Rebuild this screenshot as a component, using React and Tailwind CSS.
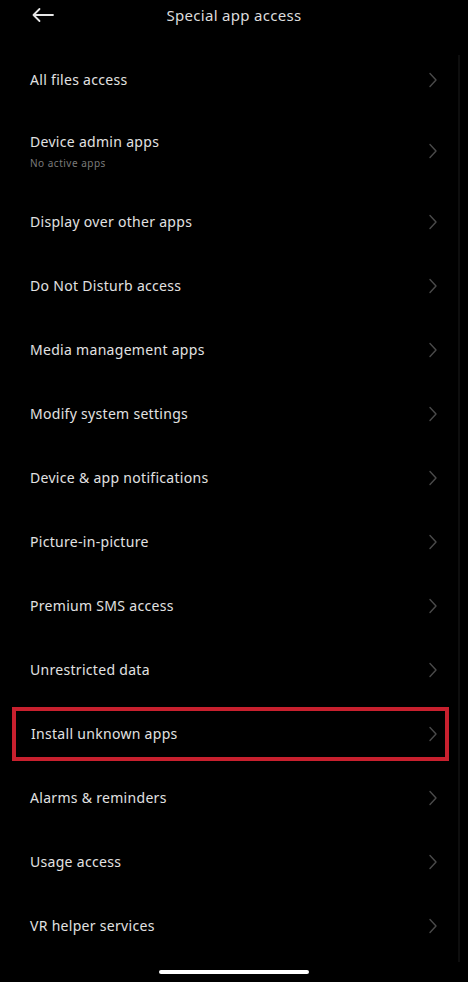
import React from "react";

const items = [
  { title: "All files access" },
  { title: "Device admin apps", sub: "No active apps" },
  { title: "Display over other apps" },
  { title: "Do Not Disturb access" },
  { title: "Media management apps" },
  { title: "Modify system settings" },
  { title: "Device & app notifications" },
  { title: "Picture-in-picture" },
  { title: "Premium SMS access" },
  { title: "Unrestricted data" },
  { title: "Install unknown apps", highlight: true },
  { title: "Alarms & reminders" },
  { title: "Usage access" },
  { title: "VR helper services" },
];

function Chevron() {
  return (
    <svg width="10" height="16" viewBox="0 0 10 16" fill="none" className="shrink-0">
      <path d="M2 1.5 L8 8 L2 14.5" stroke="#4a4a4a" strokeWidth="1.4" strokeLinecap="round" strokeLinejoin="round" />
    </svg>
  );
}

function Row({ item }) {
  if (item.highlight) {
    return (
      <div className="h-16 flex items-center pl-3 pr-[19px]">
        <div className="w-full h-[54px] border-4 border-[#c8202e] flex items-center justify-between pl-[15px] pr-[7px]">
          <span className="text-[14px] text-[#e2e2e2] tracking-[0.3px] leading-5">{item.title}</span>
          <Chevron />
        </div>
      </div>
    );
  }

  return (
    <div className={`flex items-center justify-between pl-[30px] pr-[30px] ${item.sub ? "h-[78px]" : "h-16"}`}>
      <div className="flex flex-col">
        <span className="text-[14px] text-[#e2e2e2] tracking-[0.3px] leading-5">{item.title}</span>
        {item.sub && (
          <span className="text-[10px] text-[#7a7a7a] tracking-[0.5px] leading-4 mt-[3px]">{item.sub}</span>
        )}
      </div>
      <Chevron />
    </div>
  );
}

export default function App() {
  return (
    <div
      className="w-[468px] h-[982px] bg-black overflow-hidden relative flex flex-col"
      style={{ fontFamily: "'Noto Sans', 'Open Sans', sans-serif" }}
    >
      <div className="h-[30px] flex items-center relative shrink-0">
        <svg width="24" height="16" viewBox="0 0 24 16" fill="none" className="ml-[31px]">
          <path d="M22 8 H2.5 M8.5 2 L2.5 8 L8.5 14" stroke="#e6e6e6" strokeWidth="1.8" strokeLinecap="round" strokeLinejoin="round" />
        </svg>
        <span className="absolute left-0 right-0 text-center text-[15px] text-[#dcdcdc] tracking-[0.3px]">
          Special app access
        </span>
      </div>
      <div className="h-[18px] shrink-0" />
      <div className="flex flex-col">
        {items.map((it) => (
          <Row key={it.title} item={it} />
        ))}
      </div>
      <div className="absolute right-[8px] top-[55px] bottom-[20px] w-[2px] bg-[#0e0e0e]" />
      <div className="absolute left-[159px] top-[970px] w-[150px] h-[4px] rounded-full bg-white" />
    </div>
  );
}
